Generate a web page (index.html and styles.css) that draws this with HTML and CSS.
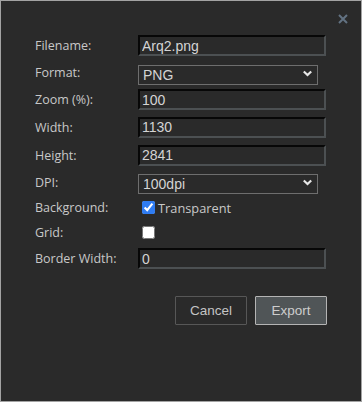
FILE: index.html
```html
<!DOCTYPE html>
<html>
<head>
<meta charset="utf-8">
<link rel="stylesheet" href="styles.css">
</head>
<body>
<div class="dialog">
  <div class="titlebar">
    <button class="close" aria-label="Close">
      <svg width="10" height="10" viewBox="0 0 10 10"><path d="M1 1L9 9M9 1L1 9" stroke="#627282" stroke-width="2" fill="none"/></svg>
    </button>
  </div>
  <form class="form">
    <label class="lbl">Filename:</label>
    <div class="ctl"><input class="txt" type="text" value="Arq2.png"></div>

    <label class="lbl">Format:</label>
    <div class="ctl"><div class="sel"><select><option>PNG</option></select><svg class="chev" width="9" height="7" viewBox="0 0 9 7"><path d="M0.8 1.5L4.5 5L8.2 1.5" stroke="#e6e6e6" stroke-width="2.2" fill="none"/></svg></div></div>

    <label class="lbl">Zoom (%):</label>
    <div class="ctl"><input class="txt" type="text" value="100"></div>

    <label class="lbl">Width:</label>
    <div class="ctl"><input class="txt" type="text" value="1130"></div>

    <label class="lbl">Height:</label>
    <div class="ctl"><input class="txt" type="text" value="2841"></div>

    <label class="lbl">DPI:</label>
    <div class="ctl"><div class="sel"><select><option>100dpi</option></select><svg class="chev" width="9" height="7" viewBox="0 0 9 7"><path d="M0.8 1.5L4.5 5L8.2 1.5" stroke="#e6e6e6" stroke-width="2.2" fill="none"/></svg></div></div>

    <label class="lbl">Background:</label>
    <div class="ctl"><label class="chk"><input type="checkbox" checked><span>Transparent</span></label></div>

    <label class="lbl">Grid:</label>
    <div class="ctl"><label class="chk"><input type="checkbox"></label></div>

    <label class="lbl">Border Width:</label>
    <div class="ctl"><input class="txt" type="text" value="0"></div>
  </form>
  <div class="actions">
    <button class="btn">Cancel</button>
    <button class="btn primary">Export</button>
  </div>
</div>
</body>
</html>
```

FILE: styles.css
```css
html, body {
  margin: 0;
  padding: 0;
  background: #2a2a2a;
}
.dialog {
  box-sizing: border-box;
  width: 362px;
  height: 402px;
  border: 1px solid #a3a3a3;
  background: #2a2a2a;
  font-family: "Open Sans", "Noto Sans", sans-serif;
  color: #c9c9c9;
}
.titlebar {
  height: 31px;
  display: flex;
  justify-content: flex-end;
  align-items: flex-start;
}
.close {
  background: none;
  border: none;
  padding: 0;
  margin: 13px 13px 0 0;
  width: 10px;
  height: 10px;
  display: flex;
}
.form {
  display: grid;
  grid-template-columns: 103px 1fr;
  grid-template-rows: 27px 27px 27px 28px 28px 26px 25px 25px 27px;
  padding-left: 34px;
  margin: 0;
}
.lbl {
  display: flex;
  align-items: center;
  font-size: 12.5px;
  color: #c8c8c8;
}
.ctl {
  display: flex;
  align-items: center;
}
.txt {
  box-sizing: border-box;
  width: 188px;
  height: 21px;
  margin: 0;
  padding: 0 2px;
  border-style: solid;
  border-width: 2px;
  border-color: #070707 #4c5052 #4c5052 #070707;
  background: #2a2a2a;
  color: #d4d4d4;
  font-family: "Liberation Sans", Arial, sans-serif;
  font-size: 14px;
  outline: none;
}
.sel {
  position: relative;
  width: 180px;
  height: 20px;
}
.sel select {
  appearance: none;
  -webkit-appearance: none;
  box-sizing: border-box;
  width: 180px;
  height: 20px;
  margin: 0;
  padding: 0 0 0 4px;
  border: 1px solid #6e6e6e;
  border-radius: 0;
  background: #2a2a2a;
  color: #d4d4d4;
  font-family: "Liberation Sans", Arial, sans-serif;
  font-size: 14px;
  outline: none;
}
.chev {
  position: absolute;
  right: 6px;
  top: 7px;
  pointer-events: none;
}
.chk {
  display: flex;
  align-items: center;
  font-size: 12.8px;
  color: #c8c8c8;
}
.chk input {
  width: 13px;
  height: 13px;
  margin: 0 3px 0 4px;
  accent-color: #2f7cf2;
}
.actions {
  display: flex;
  justify-content: flex-end;
  gap: 8px;
  padding-right: 34px;
  margin-top: 24px;
}
.btn {
  box-sizing: border-box;
  width: 72px;
  height: 29px;
  border: 1px solid #575757;
  border-radius: 1px;
  background: #2a2a2a;
  color: #c4c4c4;
  font-family: "Liberation Sans", Arial, sans-serif;
  font-size: 13.5px;
  padding: 0;
}
.btn.primary {
  background: #505557;
  border-color: #b4b4b4;
  color: #cdcdcd;
}
```
